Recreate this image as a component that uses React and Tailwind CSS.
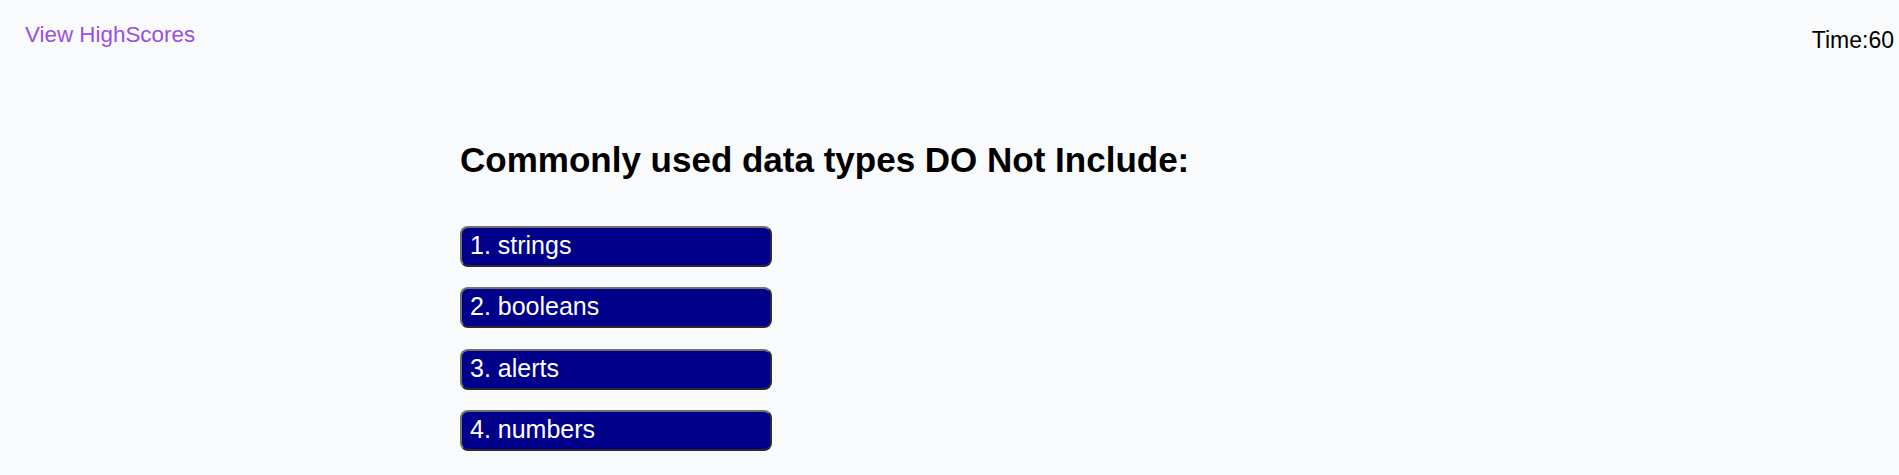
import { useState } from "react";

const choices = ["1. strings", "2. booleans", "3. alerts", "4. numbers"];

export default function App() {
  const [time] = useState(60);

  return (
    <div className="min-h-screen bg-[#f9fafc] font-['Liberation_Sans',Arial,sans-serif] leading-[normal] text-black">
      <header className="flex items-start justify-between">
        <a href="#" className="ml-[25px] mt-[22px] text-[22.4px] leading-[normal] text-[#9a4fe0]">
          View HighScores
        </a>
        <div className="mr-[5px] mt-[27px] text-[23px] leading-[normal]">Time:{time}</div>
      </header>

      <main className="ml-[460px] mt-[86px]">
        <h2 className="text-[35px] font-bold leading-[normal]">Commonly used data types DO Not Include:</h2>
        <div className="mt-[46px] flex flex-col gap-[20.3px]">
          {choices.map((choice) => (
            <button
              key={choice}
              type="button"
              className="h-[41px] w-[312px] rounded-[8px] border-2 border-t-[#707070] border-l-[#707070] border-r-[#2a2a2a] border-b-[#2a2a2a] bg-[#00008b] pb-[5px] pl-[8px] pt-[3px] text-left text-[25px] leading-[normal] text-white"
            >
              {choice}
            </button>
          ))}
        </div>
      </main>
    </div>
  );
}
